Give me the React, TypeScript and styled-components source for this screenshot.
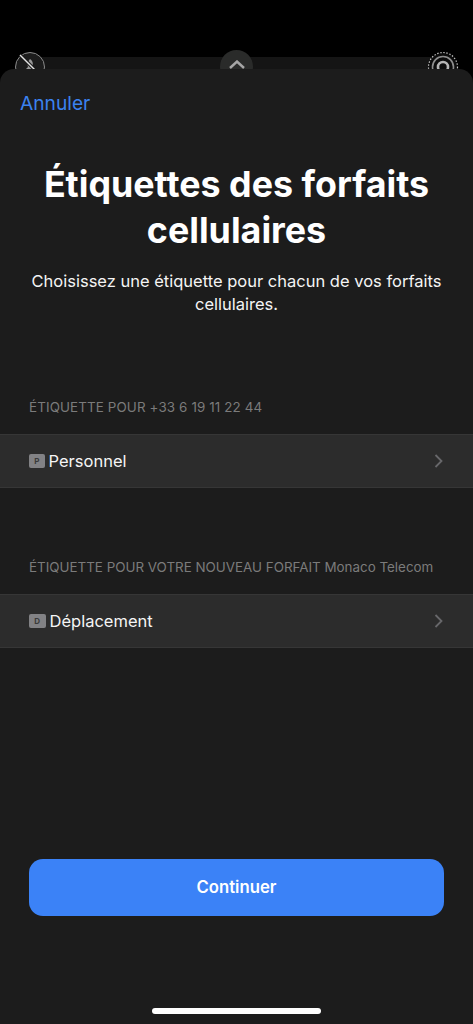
import styled, { createGlobalStyle } from 'styled-components';

const GlobalStyle = createGlobalStyle`
  html,
  body {
    margin: 0;
    padding: 0;
    background: #000;
  }

  * {
    box-sizing: border-box;
  }
`;

const Screen = styled.div`
  display: flex;
  flex-direction: column;
  width: 473px;
  height: 1024px;
  overflow: hidden;
  background: #000;
  font-family: Inter, 'Liberation Sans', sans-serif;
`;

const Backstage = styled.div`
  position: relative;
  display: flex;
  flex: 0 0 69px;
  align-items: flex-start;
  justify-content: space-between;
  padding: 50px 14px 0;
  overflow: hidden;
`;

const BackBar = styled.div`
  position: absolute;
  top: 57px;
  left: 30px;
  right: 30px;
  height: 20px;
  background: #151515;
`;

const RoundIcon = styled.svg`
  position: relative;
  display: block;
  width: 32px;
  height: 32px;
`;

const Handle = styled.div`
  position: relative;
  display: flex;
  justify-content: center;
  width: 33px;
  height: 33px;
  padding-top: 10px;
  border-radius: 50%;
  background: #2a2b2a;
`;

const Sheet = styled.main`
  display: flex;
  flex: 1;
  flex-direction: column;
  border-radius: 14px 14px 0 0;
  background: #1c1c1c;
`;

const CancelLink = styled.a`
  margin: 22px 0 0 20px;
  color: #3b82f0;
  font-size: 19.2px;
  line-height: 24px;
`;

const Title = styled.h1`
  margin: 46px 0 0;
  color: #fff;
  font-size: 35.8px;
  font-weight: 700;
  line-height: 46px;
  text-align: center;
`;

const Intro = styled.p`
  margin: 17px 28px 0;
  color: #f4f4f4;
  font-size: 16.5px;
  line-height: 23px;
  text-align: center;
`;

const SectionLabel = styled.div<{ $top: number; $spacing?: number }>`
  margin: ${(p) => p.$top}px 0 0 29px;
  color: #7b7b7b;
  font-size: 13.4px;
  letter-spacing: ${(p) => p.$spacing ?? 0}px;
  line-height: 16px;
  white-space: nowrap;
`;

const Row = styled.div`
  display: flex;
  align-items: center;
  height: 54px;
  margin-top: 19px;
  padding: 0 29px;
  border-top: 1px solid #363636;
  border-bottom: 1px solid #363636;
  background: #2c2c2c;
`;

const Badge = styled.span<{ $wide?: boolean }>`
  display: flex;
  align-items: center;
  justify-content: center;
  width: ${(p) => (p.$wide ? 16.5 : 15.5)}px;
  height: 14px;
  border-radius: 2px;
  background: #828285;
  color: #3a3a3a;
  font-size: 8px;
  font-weight: 700;
`;

const RowText = styled.span`
  flex: 1;
  margin-left: 4px;
  color: #f5f5f5;
  font-size: 16.5px;
`;

const Chevron = styled.svg`
  display: block;
  width: 9px;
  height: 14px;
  margin-right: 1px;
`;

const Spacer = styled.div`
  flex: 1;
`;

const ContinueButton = styled.button`
  height: 57px;
  margin: 0 29px;
  padding: 0 0 2px;
  border: 0;
  border-radius: 14px;
  background: #3b82f7;
  color: #fff;
  font-family: inherit;
  font-size: 16.7px;
  font-weight: 600;
`;

const HomeBar = styled.div`
  align-self: center;
  width: 169px;
  height: 6px;
  margin: 92px 0 10px;
  border-radius: 3px;
  background: #fff;
`;

const RowChevron = () => (
  <Chevron viewBox='0 0 9 14' fill='none'>
    <path d='M1.5 1l6 6-6 6' stroke='#68686b' strokeWidth='1.8' />
  </Chevron>
);

const App = (): JSX.Element => {
  return (
    <Screen>
      <GlobalStyle />
      <Backstage>
        <BackBar />
        <RoundIcon viewBox='0 0 32 32' fill='none'>
          <circle cx='16' cy='17' r='14.5' fill='#1c1c1c' stroke='#8a8a8a' strokeWidth='1' />
          <path d='M16 9c3 2 3.5 5 2 8l4 4H10l4-4c-1-3 0-6 2-8z' fill='#9a9a9a' />
          <path d='M6 5l21 21' stroke='#1c1c1c' strokeWidth='3.5' />
          <path d='M6 5l21 21' stroke='#e4e4e4' strokeWidth='1.4' />
        </RoundIcon>
        <Handle>
          <svg width='16' height='10' viewBox='0 0 16 10' fill='none'>
            <path d='M1 8l7-6.5L15 8' stroke='#a6a6a6' strokeWidth='2.4' />
          </svg>
        </Handle>
        <RoundIcon viewBox='0 0 32 32' fill='none'>
          <circle cx='16' cy='17' r='14.5' fill='#0c0c0c' stroke='#c8c8c8' strokeWidth='1.2' strokeDasharray='1.4 1.7' />
          <circle cx='16' cy='17' r='10.5' stroke='#8e8e8e' strokeWidth='1.6' />
          <circle cx='16' cy='17' r='5' stroke='#b4b4b4' strokeWidth='2.6' />
        </RoundIcon>
      </Backstage>
      <Sheet>
        <CancelLink>Annuler</CancelLink>
        <Title>
          Étiquettes des forfaits
          <br />
          cellulaires
        </Title>
        <Intro>Choisissez une étiquette pour chacun de vos forfaits cellulaires.</Intro>
        <SectionLabel $top={83} $spacing={0.12}>ÉTIQUETTE POUR +33 6 19 11 22 44</SectionLabel>
        <Row>
          <Badge>P</Badge>
          <RowText>Personnel</RowText>
          <RowChevron />
        </Row>
        <SectionLabel $top={71}>ÉTIQUETTE POUR VOTRE NOUVEAU FORFAIT Monaco Telecom</SectionLabel>
        <Row>
          <Badge $wide>D</Badge>
          <RowText>Déplacement</RowText>
          <RowChevron />
        </Row>
        <Spacer />
        <ContinueButton>Continuer</ContinueButton>
        <HomeBar />
      </Sheet>
    </Screen>
  );
};

export default App;
